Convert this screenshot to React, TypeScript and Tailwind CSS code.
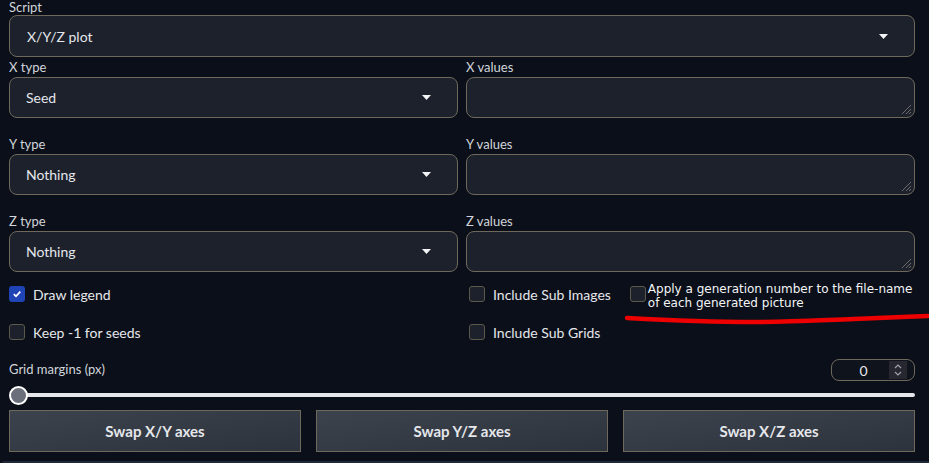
import React from "react";

const ui = "font-['Lato','Liberation_Sans',sans-serif]";

function Caret() {
  return (
    <svg width="9" height="5" viewBox="0 0 9 5" className="shrink-0">
      <path d="M0 0 L9 0 L4.5 5 Z" fill="#f3f4f6" />
    </svg>
  );
}

function Dropdown({ value, className = "" }: { value: string; className?: string }) {
  return (
    <div
      className={`flex items-center justify-between rounded-lg border border-[#6e695b] bg-[#1c212c] pl-[16px] pr-[26px] text-[14px] text-[#e5e7eb] ${className}`}
    >
      <span>{value}</span>
      <Caret />
    </div>
  );
}

function TextArea() {
  return (
    <div className="relative h-[41px] rounded-lg border border-[#6e695b] bg-[#1c212c]">
      <svg width="12" height="12" viewBox="0 0 12 12" className="absolute bottom-[2px] right-[2px]">
        <path d="M11 2 L2 11 M11 6 L6 11 M11 9 L9 11" stroke="#6b6b6b" strokeWidth="1" />
      </svg>
    </div>
  );
}

function Field({ label, children }: { label: string; children: React.ReactNode }) {
  return (
    <div className="flex flex-col">
      <div className="h-[17px] text-[13px] leading-[14px] text-[#d1d5db]">{label}</div>
      {children}
    </div>
  );
}

function Check({ checked = false }: { checked?: boolean }) {
  if (checked) {
    return (
      <div className="flex h-[16px] w-[16px] shrink-0 items-center justify-center rounded-[3px] bg-[#1e44b5]">
        <svg width="10" height="10" viewBox="0 0 10 10">
          <path d="M1.8 5.2 L4 7.3 L8.3 2.6" stroke="white" strokeWidth="1.8" fill="none" />
        </svg>
      </div>
    );
  }
  return <div className="h-[16px] w-[16px] shrink-0 rounded-[3px] border border-[#5c584b] bg-[#1c212c]" />;
}

function CheckRow({ label, checked }: { label: string; checked?: boolean }) {
  return (
    <div className="flex h-[16px] items-center gap-[8px] text-[14px] text-[#e5e7eb]">
      <Check checked={checked} />
      <span>{label}</span>
    </div>
  );
}

function SwapButton({ label }: { label: string }) {
  return (
    <button className="flex h-[42px] items-center justify-center border border-[#6e695b] bg-gradient-to-br from-[#3d434d] to-[#2d333d] text-[15px] font-bold text-[#e5e7eb]">
      {label}
    </button>
  );
}

export default function App() {
  return (
    <div className={`relative h-[463px] w-[929px] overflow-hidden bg-[#0b0f19] ${ui}`}>
      <div className="flex flex-col px-[9px] pr-[14px]">
        {/* script */}
        <div className="h-[15px] pt-[1px] text-[13px] leading-[13px] text-[#d1d5db]">Script</div>
        <Dropdown value="X/Y/Z plot" className="h-[42px] pl-[17px] pr-[26px]" />

        <div className="mt-[3px] grid grid-cols-2 gap-x-[8px]">
          <Field label="X type">
            <Dropdown value="Seed" className="h-[41px]" />
          </Field>
          <Field label="X values">
            <TextArea />
          </Field>
        </div>

        <div className="mt-[19px] grid grid-cols-2 gap-x-[8px]">
          <Field label="Y type">
            <Dropdown value="Nothing" className="h-[41px]" />
          </Field>
          <Field label="Y values">
            <TextArea />
          </Field>
        </div>

        <div className="mt-[19px] grid grid-cols-2 gap-x-[8px]">
          <Field label="Z type">
            <Dropdown value="Nothing" className="h-[41px]" />
          </Field>
          <Field label="Z values">
            <TextArea />
          </Field>
        </div>

        {/* checkboxes */}
        <div className="mt-[14px] grid grid-cols-2 gap-x-[8px]">
          <div className="flex flex-col gap-[22px]">
            <CheckRow label="Draw legend" checked />
            <CheckRow label="Keep -1 for seeds" />
          </div>
          <div className="flex">
            <div className="flex flex-col gap-[22px] pl-[3px]">
              <CheckRow label="Include Sub Images" />
              <CheckRow label="Include Sub Grids" />
            </div>
            <div className="ml-[19px] flex items-start gap-[2px]">
              <Check />
              <div className="-mt-[4px] font-['DejaVu_Sans',sans-serif] text-[12px] leading-[14px] text-[#f3f4f6]">
                Apply a generation number to the file-name
                <br />
                of each generated picture
              </div>
            </div>
          </div>
        </div>

        {/* grid margins */}
        <div className="mt-[19px] flex items-center justify-between">
          <span className="text-[13px] text-[#d1d5db]">Grid margins (px)</span>
          <div className="flex h-[22px] w-[84px] items-center rounded-lg border border-[#6e695b] bg-[#0f131c] pl-[6px] pr-[7px]">
            <span className="flex-1 text-center text-[14px] text-[#e5e7eb]">0</span>
            <div className="flex h-[18px] w-[18px] items-center justify-center bg-[#27272f]">
              <svg width="10" height="14" viewBox="0 0 10 14">
                <path d="M2 5 L5 2 L8 5 M2 9 L5 12 L8 9" stroke="#9ca3af" strokeWidth="1.2" fill="none" />
              </svg>
            </div>
          </div>
        </div>

        {/* slider */}
        <div className="relative mt-[4px] flex h-[20px] items-center">
          <div className="ml-[9px] h-[4px] flex-1 rounded-full bg-[#e5e7eb]" />
          <div className="absolute left-0 top-[1px] h-[19px] w-[19px] rounded-full border-2 border-white bg-[#6b6e7b]" />
        </div>

        {/* buttons */}
        <div className="mt-[5px] grid grid-cols-3 gap-x-[15px]">
          <SwapButton label="Swap X/Y axes" />
          <SwapButton label="Swap Y/Z axes" />
          <SwapButton label="Swap X/Z axes" />
        </div>
      </div>

      {/* panel edge */}
      <div className="absolute bottom-0 left-[2px] right-0 h-[2px] rounded-tl-[2px] bg-[#1f2838]" />

      {/* red annotation stroke */}
      <svg className="pointer-events-none absolute left-[624px] top-[310px]" width="305" height="16" viewBox="0 0 305 16">
        <path
          d="M3 8 C40 10 80 12 130 12 C170 12 200 10 230 9 C260 8 280 7 304 6"
          stroke="#ee0000"
          strokeWidth="4.5"
          fill="none"
          strokeLinecap="round"
        />
      </svg>
    </div>
  );
}
